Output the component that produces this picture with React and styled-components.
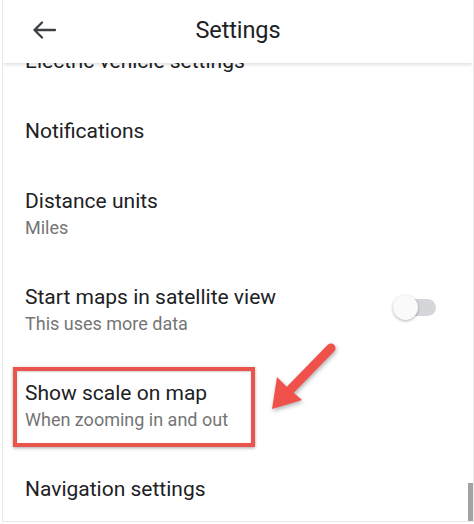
import React from 'react';
import styled, { createGlobalStyle } from 'styled-components';

const Global = createGlobalStyle`
  html, body {
    margin: 0;
    padding: 0;
    background: #fff;
  }
  body {
    font-family: Roboto, "Noto Sans", Arial, sans-serif;
    -webkit-font-smoothing: antialiased;
  }
`;

const Screen = styled.div`
  position: relative;
  box-sizing: border-box;
  width: 472px;
  height: 522px;
  margin-left: 2px;
  border-left: 1px solid #e8e8e8;
  border-right: 1px solid #ececec;
  border-bottom: 1px solid #e8e8e8;
  display: flex;
  flex-direction: column;
  overflow: hidden;
  background: #fff;
`;

const Header = styled.header`
  position: relative;
  z-index: 2;
  flex: none;
  height: 63px;
  display: grid;
  grid-template-columns: 1fr auto 1fr;
  align-items: start;
  background: #fff;
  box-shadow: 0 3px 3px -1px rgba(0, 0, 0, 0.12);
`;

const BackButton = styled.button`
  justify-self: start;
  display: flex;
  align-items: center;
  height: 60px;
  border: 0;
  background: none;
  padding: 0 0 0 29px;
  color: #3c4043;
  cursor: pointer;
`;

const Title = styled.h1`
  margin: 0;
  font-size: 23.5px;
  font-weight: 400;
  line-height: 60px;
  color: #202124;
  letter-spacing: -0.1px;
`;

const Body = styled.div`
  flex: 1;
  overflow: hidden;
`;

/* the list is scrolled a little, so the first row sits under the header */
const List = styled.ul`
  list-style: none;
  margin: -37px 0 0;
  padding: 0;
`;

const Row = styled.li`
  display: flex;
  align-items: center;
  justify-content: space-between;
  padding: 22px 37px 22px 22px;
`;

const Texts = styled.div`
  display: flex;
  flex-direction: column;
`;

const Label = styled.span`
  font-size: 21px;
  line-height: 26px;
  color: #202124;
`;

const Hint = styled.span`
  margin-top: 2px;
  font-size: 18px;
  line-height: 24px;
  color: #757575;
`;

const Switch = styled.span`
  position: relative;
  flex: none;
  width: 42px;
  height: 17px;
  margin-bottom: 5px;
  border-radius: 9px;
  background: #d5d6d9;

  &::after {
    content: '';
    position: absolute;
    left: -1px;
    top: 50%;
    width: 25px;
    height: 25px;
    margin-top: -12.5px;
    border-radius: 50%;
    background: #fafafa;
    box-shadow: 0 1px 3px rgba(0, 0, 0, 0.3);
  }
`;

const Highlight = styled.div`
  position: absolute;
  left: 10px;
  top: 367px;
  width: 242px;
  height: 80px;
  box-sizing: border-box;
  border: 4px solid #e9544c;
  box-shadow: 0 1px 3px rgba(0, 0, 0, 0.35), inset 0 1px 2px rgba(0, 0, 0, 0.2);
  pointer-events: none;
`;

const Pointer = styled.svg`
  position: absolute;
  left: 258px;
  top: 338px;
  overflow: visible;
  filter: drop-shadow(1px 2px 2px rgba(0, 0, 0, 0.3));
  pointer-events: none;
`;

const ScrollThumb = styled.div`
  position: absolute;
  right: 0;
  bottom: 0;
  width: 5px;
  height: 38px;
  background: #a3a3a3;
`;

const items = [
  { label: 'Electric vehicle settings' },
  { label: 'Notifications' },
  { label: 'Distance units', hint: 'Miles' },
  { label: 'Start maps in satellite view', hint: 'This uses more data', toggle: true },
  { label: 'Show scale on map', hint: 'When zooming in and out' },
  { label: 'Navigation settings' },
];

const App = () => {
  return (
    <>
      <Global />
      <Screen>
        <Header>
          <BackButton aria-label="Back">
            <svg width="24" height="18" viewBox="0 0 24 18" fill="none">
              <path
                d="M23 9H2.5M10 1.5L2.5 9l7.5 7.5"
                stroke="currentColor"
                strokeWidth="2.3"
                strokeLinecap="round"
                strokeLinejoin="round"
              />
            </svg>
          </BackButton>
          <Title>Settings</Title>
        </Header>

        <Body>
          <List>
            {items.map((item) => (
              <Row key={item.label}>
                <Texts>
                  <Label>{item.label}</Label>
                  {item.hint && <Hint>{item.hint}</Hint>}
                </Texts>
                {item.toggle && <Switch role="switch" aria-checked="false" />}
              </Row>
            ))}
          </List>
        </Body>

        <Highlight />
        <Pointer width="80" height="80" viewBox="0 0 80 80">
          <path d="M70 10L29 52" stroke="#f0514a" strokeWidth="9" strokeLinecap="round" />
          <path d="M11 71L16 39L27 50L41 62Z" fill="#f0514a" strokeLinejoin="round" />
        </Pointer>
        <ScrollThumb />
      </Screen>
    </>
  );
};

export default App;
